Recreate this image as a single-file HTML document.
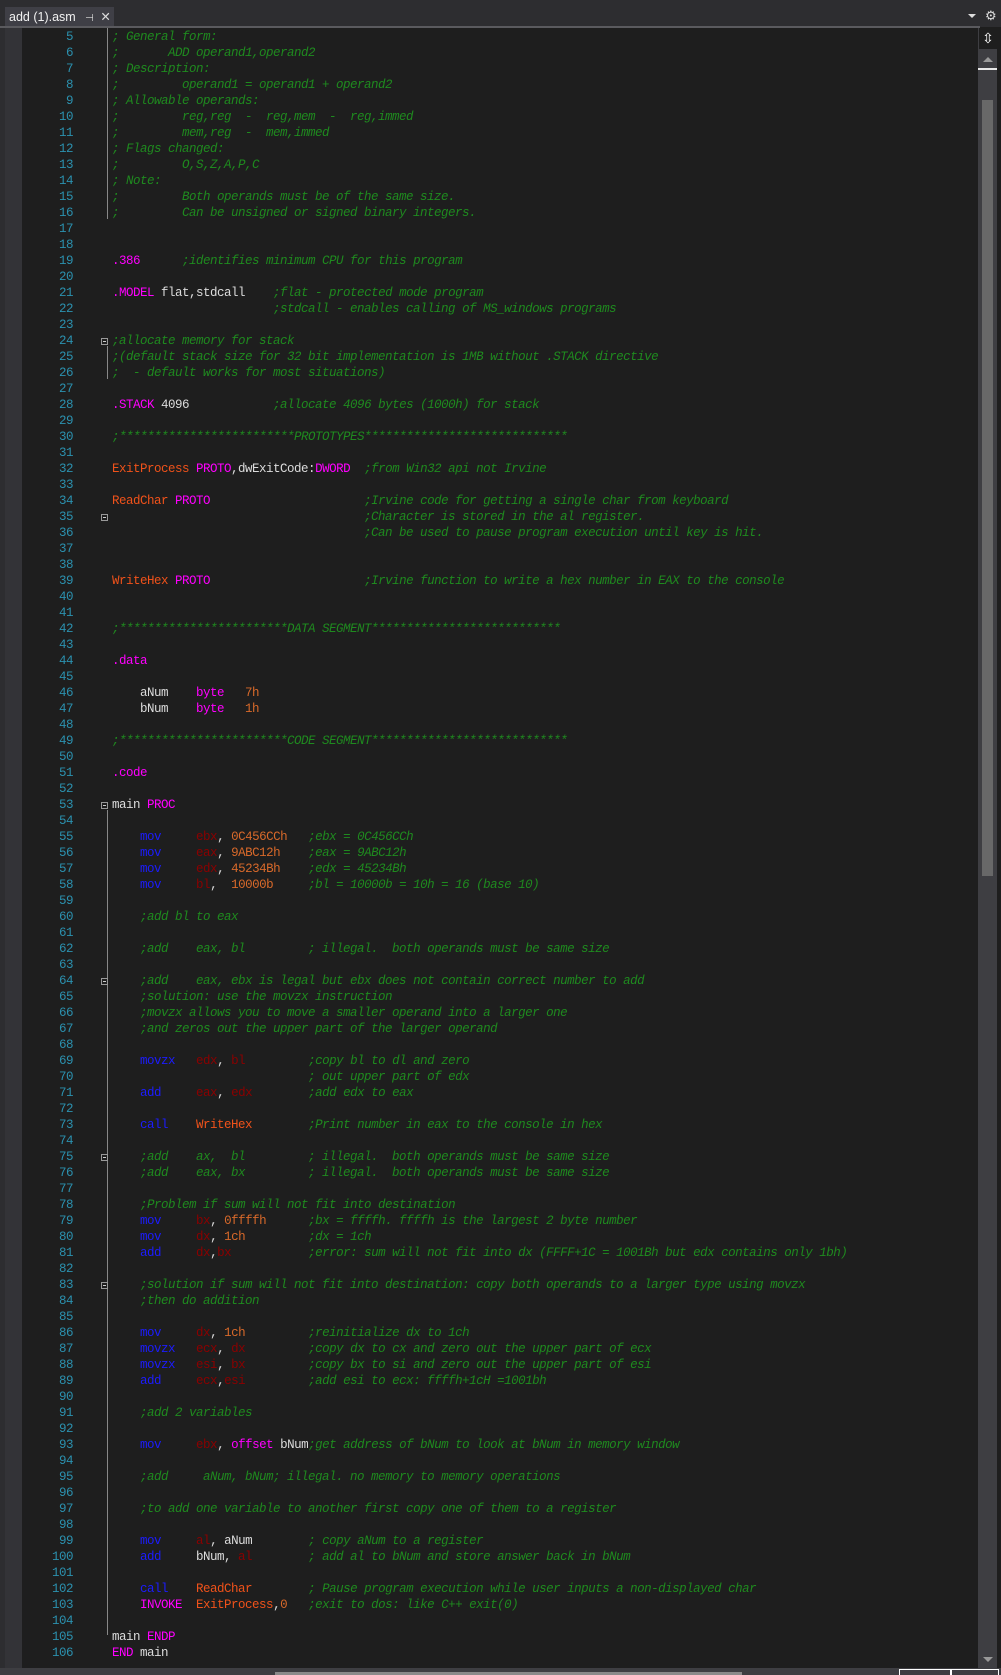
<!DOCTYPE html>
<html><head><meta charset="utf-8"><style>
html,body{margin:0;padding:0;width:1001px;height:1675px;overflow:hidden;background:#1e1e1e;font-family:"Liberation Sans",sans-serif}
#tabbar{position:absolute;left:0;top:0;width:1001px;height:27px;background:#2d2d30}
#tab{position:absolute;left:5px;top:7px;width:109px;height:20px;background:#3f3f46;color:#f1f1f1;font-size:12.5px;line-height:20px;padding-left:4px;box-sizing:border-box}
#tabline{position:absolute;left:0;top:26px;width:980px;height:2px;background:#5a5a5e}
#leftstrip{position:absolute;left:0;top:28px;width:5px;height:1640px;background:#2d2d30}
#leftstrip2{position:absolute;left:5px;top:28px;width:17px;height:1640px;background:#333337}
pre{margin:0;font-family:"Liberation Mono",monospace;font-size:12.5px;letter-spacing:-0.5px;line-height:16px;position:absolute}
#nums{left:22px;top:29px;width:51px;text-align:right;color:#2b91af}
#code{left:112px;top:29px;color:#dcdcdc}
.c{color:#1f8a1f;font-style:italic}
.d{color:#ff00ff}
.k{color:#1c1cff}
.r{color:#8b0000}
.n{color:#d8692a}
.f{color:#f0521a}
.fold{position:absolute;left:101px;width:7px;height:7px;border:1px solid #999;box-sizing:border-box}
.fold:after{content:"";position:absolute;left:1px;top:2px;width:3px;height:1px;background:#ccc}
.vl{position:absolute;left:107px;width:1px;background:#888}
#vscroll{position:absolute;left:978px;top:28px;width:19px;height:1640px;background:#3e3e42}
#thumb{position:absolute;left:982px;top:100px;width:11px;height:776px;background:#686868}
#split{position:absolute;left:979px;top:28px;width:18px;height:21px;background:#1e1e1e;color:#fff;font-size:14px;text-align:center;line-height:21px}
#hbar{position:absolute;left:0;top:1668px;width:1001px;height:7px;background:#3e3e42}
</style></head><body>
<div id="tabbar"></div>
<div id="tab">add (1).asm <span style="font-size:10px;color:#ddd;margin-left:6px">⊣</span> <span style="color:#ddd;margin-left:3px">✕</span></div>
<div style="position:absolute;left:968px;top:14px;width:0;height:0;border-left:4px solid transparent;border-right:4px solid transparent;border-top:4px solid #ddd"></div>
<div style="position:absolute;left:985px;top:8px;color:#ddd;font-size:13px">⚙</div>
<div id="tabline"></div>
<div id="leftstrip"></div><div id="leftstrip2"></div>
<pre id="nums">5
6
7
8
9
10
11
12
13
14
15
16
17
18
19
20
21
22
23
24
25
26
27
28
29
30
31
32
33
34
35
36
37
38
39
40
41
42
43
44
45
46
47
48
49
50
51
52
53
54
55
56
57
58
59
60
61
62
63
64
65
66
67
68
69
70
71
72
73
74
75
76
77
78
79
80
81
82
83
84
85
86
87
88
89
90
91
92
93
94
95
96
97
98
99
100
101
102
103
104
105
106</pre>
<div class="vl" style="top:28px;height:191px"></div>
<div class="fold" style="top:338px"></div><div class="vl" style="top:346px;height:33px"></div>
<div class="fold" style="top:514px"></div>
<div class="fold" style="top:802px"></div><div class="vl" style="top:810px;height:825px"></div>
<div class="fold" style="top:978px"></div>
<div class="fold" style="top:1154px"></div>
<div class="fold" style="top:1282px"></div>
<pre id="code"><span class="c">; General form:</span>
<span class="c">;       ADD operand1,operand2</span>
<span class="c">; Description:</span>
<span class="c">;         operand1 = operand1 + operand2</span>
<span class="c">; Allowable operands:</span>
<span class="c">;         reg,reg  -  reg,mem  -  reg,immed</span>
<span class="c">;         mem,reg  -  mem,immed</span>
<span class="c">; Flags changed:</span>
<span class="c">;         O,S,Z,A,P,C</span>
<span class="c">; Note:</span>
<span class="c">;         Both operands must be of the same size.</span>
<span class="c">;         Can be unsigned or signed binary integers.</span>


<span class="d">.386</span>      <span class="c">;identifies minimum CPU for this program</span>

<span class="d">.MODEL</span> flat,stdcall    <span class="c">;flat - protected mode program</span>
                       <span class="c">;stdcall - enables calling of MS_windows programs</span>

<span class="c">;allocate memory for stack</span>
<span class="c">;(default stack size for 32 bit implementation is 1MB without .STACK directive</span>
<span class="c">;  - default works for most situations)</span>

<span class="d">.STACK</span> 4096            <span class="c">;allocate 4096 bytes (1000h) for stack</span>

<span class="c">;*************************PROTOTYPES*****************************</span>

<span class="f">ExitProcess</span> <span class="d">PROTO</span>,dwExitCode:<span class="d">DWORD</span>  <span class="c">;from Win32 api not Irvine</span>

<span class="f">ReadChar</span> <span class="d">PROTO</span>                      <span class="c">;Irvine code for getting a single char from keyboard</span>
                                    <span class="c">;Character is stored in the al register.</span>
                                    <span class="c">;Can be used to pause program execution until key is hit.</span>


<span class="f">WriteHex</span> <span class="d">PROTO</span>                      <span class="c">;Irvine function to write a hex number in EAX to the console</span>


<span class="c">;************************DATA SEGMENT***************************</span>

<span class="d">.data</span>

    aNum    <span class="d">byte</span>   <span class="n">7h</span>
    bNum    <span class="d">byte</span>   <span class="n">1h</span>

<span class="c">;************************CODE SEGMENT****************************</span>

<span class="d">.code</span>

main <span class="d">PROC</span>

    <span class="k">mov</span>     <span class="r">ebx</span>, <span class="n">0C456CCh</span>   <span class="c">;ebx = 0C456CCh</span>
    <span class="k">mov</span>     <span class="r">eax</span>, <span class="n">9ABC12h</span>    <span class="c">;eax = 9ABC12h</span>
    <span class="k">mov</span>     <span class="r">edx</span>, <span class="n">45234Bh</span>    <span class="c">;edx = 45234Bh</span>
    <span class="k">mov</span>     <span class="r">bl</span>,  <span class="n">10000b</span>     <span class="c">;bl = 10000b = 10h = 16 (base 10)</span>

    <span class="c">;add bl to eax</span>

    <span class="c">;add    eax, bl         ; illegal.  both operands must be same size</span>

    <span class="c">;add    eax, ebx is legal but ebx does not contain correct number to add</span>
    <span class="c">;solution: use the movzx instruction</span>
    <span class="c">;movzx allows you to move a smaller operand into a larger one</span>
    <span class="c">;and zeros out the upper part of the larger operand</span>

    <span class="k">movzx</span>   <span class="r">edx</span>, <span class="r">bl</span>         <span class="c">;copy bl to dl and zero</span>
                            <span class="c">; out upper part of edx</span>
    <span class="k">add</span>     <span class="r">eax</span>, <span class="r">edx</span>        <span class="c">;add edx to eax</span>

    <span class="k">call</span>    <span class="f">WriteHex</span>        <span class="c">;Print number in eax to the console in hex</span>

    <span class="c">;add    ax,  bl         ; illegal.  both operands must be same size</span>
    <span class="c">;add    eax, bx         ; illegal.  both operands must be same size</span>

    <span class="c">;Problem if sum will not fit into destination</span>
    <span class="k">mov</span>     <span class="r">bx</span>, <span class="n">0ffffh</span>      <span class="c">;bx = ffffh. ffffh is the largest 2 byte number</span>
    <span class="k">mov</span>     <span class="r">dx</span>, <span class="n">1ch</span>         <span class="c">;dx = 1ch</span>
    <span class="k">add</span>     <span class="r">dx</span>,<span class="r">bx</span>           <span class="c">;error: sum will not fit into dx (FFFF+1C = 1001Bh but edx contains only 1bh)</span>

    <span class="c">;solution if sum will not fit into destination: copy both operands to a larger type using movzx</span>
    <span class="c">;then do addition</span>

    <span class="k">mov</span>     <span class="r">dx</span>, <span class="n">1ch</span>         <span class="c">;reinitialize dx to 1ch</span>
    <span class="k">movzx</span>   <span class="r">ecx</span>, <span class="r">dx</span>         <span class="c">;copy dx to cx and zero out the upper part of ecx</span>
    <span class="k">movzx</span>   <span class="r">esi</span>, <span class="r">bx</span>         <span class="c">;copy bx to si and zero out the upper part of esi</span>
    <span class="k">add</span>     <span class="r">ecx</span>,<span class="r">esi</span>         <span class="c">;add esi to ecx: ffffh+1cH =1001bh</span>

    <span class="c">;add 2 variables</span>

    <span class="k">mov</span>     <span class="r">ebx</span>, <span class="d">offset</span> bNum<span class="c">;get address of bNum to look at bNum in memory window</span>

    <span class="c">;add     aNum, bNum; illegal. no memory to memory operations</span>

    <span class="c">;to add one variable to another first copy one of them to a register</span>

    <span class="k">mov</span>     <span class="r">al</span>, aNum        <span class="c">; copy aNum to a register</span>
    <span class="k">add</span>     bNum, <span class="r">al</span>        <span class="c">; add al to bNum and store answer back in bNum</span>

    <span class="k">call</span>    <span class="f">ReadChar</span>        <span class="c">; Pause program execution while user inputs a non-displayed char</span>
    <span class="d">INVOKE</span>  <span class="f">ExitProcess</span>,<span class="n">0</span>   <span class="c">;exit to dos: like C++ exit(0)</span>

main <span class="d">ENDP</span>
<span class="d">END</span> main</pre>
<div id="vscroll"></div>
<div id="split">⇳</div>
<div style="position:absolute;left:983px;top:57px;width:0;height:0;border-left:5px solid transparent;border-right:5px solid transparent;border-bottom:5px solid #999"></div>
<div style="position:absolute;left:978px;top:68px;width:19px;height:2px;background:#e8e8e8"></div>
<div id="thumb"></div>
<div style="position:absolute;left:983px;top:1657px;width:0;height:0;border-left:5px solid transparent;border-right:5px solid transparent;border-top:5px solid #999"></div>
<div id="hbar"></div>
<div style="position:absolute;left:275px;top:1672px;width:467px;height:3px;background:#8a8a8a"></div>
<div style="position:absolute;left:899px;top:1669px;width:52px;height:6px;border:1px solid #fff;border-bottom:none;box-sizing:border-box"></div>
<div style="position:absolute;left:951px;top:1669px;width:48px;height:6px;border:1px solid #fff;border-bottom:none;box-sizing:border-box"></div>
</body></html>
